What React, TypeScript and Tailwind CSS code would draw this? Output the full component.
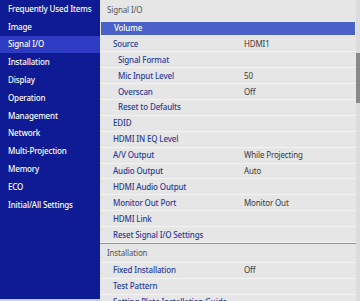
import React from "react";

const nav = [
  "Frequently Used Items",
  "Image",
  "Signal I/O",
  "Installation",
  "Display",
  "Operation",
  "Management",
  "Network",
  "Multi-Projection",
  "Memory",
  "ECO",
  "Initial/All Settings",
];

type Row = { label: string; value?: string; indent?: boolean; active?: boolean };

const signalRows: Row[] = [
  { label: "Volume", active: true },
  { label: "Source", value: "HDMI1" },
  { label: "Signal Format", indent: true },
  { label: "Mic Input Level", value: "50", indent: true },
  { label: "Overscan", value: "Off", indent: true },
  { label: "Reset to Defaults", indent: true },
  { label: "EDID" },
  { label: "HDMI IN EQ Level" },
  { label: "A/V Output", value: "While Projecting" },
  { label: "Audio Output", value: "Auto" },
  { label: "HDMI Audio Output" },
  { label: "Monitor Out Port", value: "Monitor Out" },
  { label: "HDMI Link" },
  { label: "Reset Signal I/O Settings" },
];

const installRows: Row[] = [
  { label: "Fixed Installation", value: "Off" },
  { label: "Test Pattern" },
  { label: "Setting Plate Installation Guide" },
];

function RowItem({ r }: { r: Row }) {
  return (
    <div
      className={
        "flex items-center h-[15.9px] shrink-0 border-b whitespace-nowrap " +
        (r.active
          ? "bg-[#4a62c8] border border-[#e9ecd8] text-white"
          : "border-[#f3f3f3] text-[#2b3a9c]")
      }
    >
      <div className={"w-[144px] shrink-0 " + (r.indent ? "pl-[18px]" : "pl-[13px]")}>{r.label}</div>
      {r.value && <div className="text-[#3a3a3a] font-normal">{r.value}</div>}
    </div>
  );
}

export default function App() {
  return (
    <div
      className="w-[360px] h-[301px] flex overflow-hidden bg-[#e6e6e6] text-[8px] tracking-[-0.15px] font-medium"
      style={{ fontFamily: '"Noto Sans", "Open Sans", sans-serif' }}
    >
      <div className="w-[100px] shrink-0 bg-[#0f1b95] flex flex-col border-b-[2px] border-[#c9cbe4]">
        {nav.map((n) => (
          <div
            key={n}
            className={
              "h-[17.8px] flex items-center pl-[8px] text-white whitespace-nowrap " +
              (n === "Signal I/O" ? "bg-[#2d3cc2]" : "")
            }
          >
            {n}
          </div>
        ))}
      </div>
      <div className="flex-1 flex overflow-hidden">
        <div className="flex-1 flex flex-col overflow-hidden">
          <div className="h-[20.5px] shrink-0 flex items-center pl-[7px] text-[#555555] font-normal">Signal I/O</div>
          {signalRows.map((r) => (
            <RowItem key={r.label} r={r} />
          ))}
          <div className="h-[1px] shrink-0 bg-[#8e8dd3]" />
          <div className="h-[19px] shrink-0 flex items-center pl-[7px] text-[#555555] font-normal border-b border-[#f3f3f3]">
            Installation
          </div>
          {installRows.map((r) => (
            <RowItem key={r.label} r={r} />
          ))}
        </div>
        <div className="w-[4px] shrink-0 bg-[#dcdcdc] flex flex-col">
          <div className="h-[53px] shrink-0" />
          <div className="h-[50px] shrink-0 bg-[#8a8a8a]" />
        </div>
      </div>
    </div>
  );
}
